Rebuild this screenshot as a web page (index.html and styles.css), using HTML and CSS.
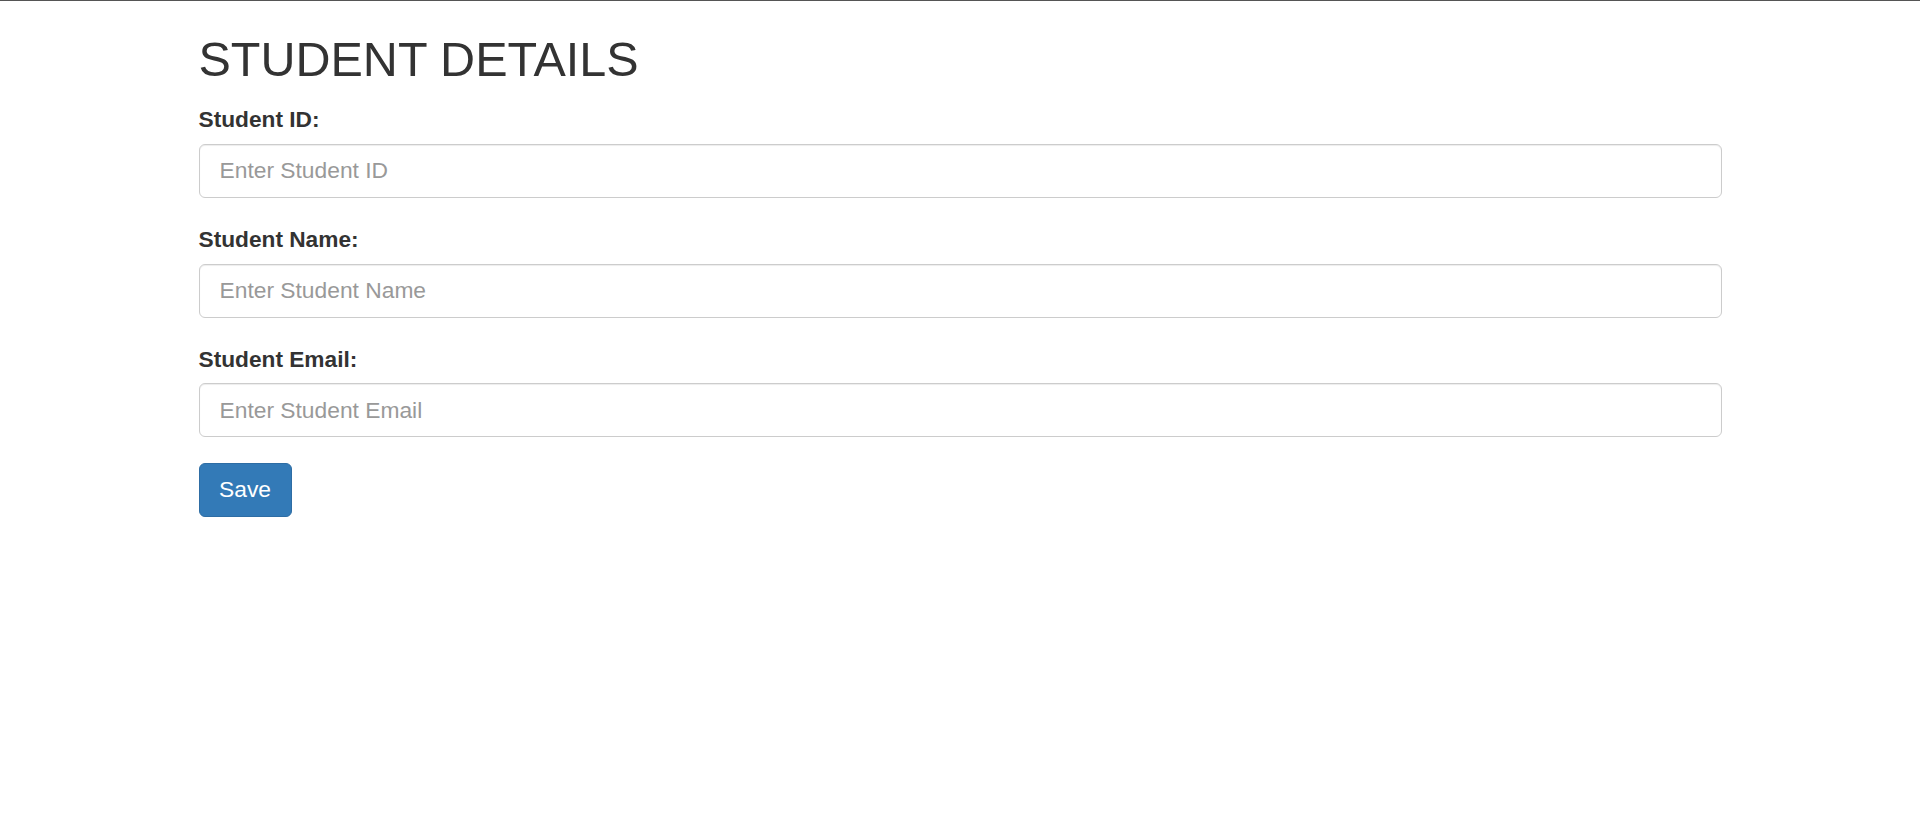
FILE: index.html
```html
<!DOCTYPE html>
<html lang="en">
<head>
<meta charset="utf-8">
<title>Student Details</title>
<link rel="stylesheet" href="styles.css">
</head>
<body>
<div class="page">
  <h2 class="title">STUDENT DETAILS</h2>
  <form class="form">
    <div class="form-group">
      <label class="label" for="sid">Student ID:</label>
      <input class="input" id="sid" type="text" placeholder="Enter Student ID">
    </div>
    <div class="form-group">
      <label class="label" for="sname">Student Name:</label>
      <input class="input" id="sname" type="text" placeholder="Enter Student Name">
    </div>
    <div class="form-group">
      <label class="label" for="semail">Student Email:</label>
      <input class="input" id="semail" type="text" placeholder="Enter Student Email">
    </div>
    <button class="btn" type="button">Save</button>
  </form>
</div>
</body>
</html>
```

FILE: styles.css
```css
html, body {
  margin: 0;
  padding: 0;
  background: #fff;
}
body {
  border-top: 1px solid #555;
  font-family: "Liberation Sans", Arial, Helvetica, sans-serif;
  color: #333;
}
.page {
  width: 1523px;
  margin: 0 auto;
  padding-top: 32px;
}
.title {
  margin: 0 0 17px;
  font-size: 48.5px;
  font-weight: 400;
  line-height: 1.1;
  color: #333;
}
.form {
  display: flex;
  flex-direction: column;
  align-items: flex-start;
}
.form-group {
  display: flex;
  flex-direction: column;
  width: 100%;
  margin-bottom: 25.3px;
}
.label {
  font-size: 22.7px;
  font-weight: 700;
  line-height: 32px;
  margin-bottom: 8.5px;
  color: #333;
}
.input {
  box-sizing: border-box;
  width: 100%;
  height: 54px;
  padding: 0 20px;
  font-family: "Liberation Sans", Arial, Helvetica, sans-serif;
  font-size: 22.8px;
  color: #555;
  background: #fff;
  border: 1px solid #ccc;
  border-radius: 6px;
  box-shadow: inset 0 1px 1px rgba(0, 0, 0, 0.075);
  outline: none;
}
.input::placeholder {
  color: #999;
}
.btn {
  box-sizing: border-box;
  height: 54px;
  width: 93px;
  padding: 0;
  font-family: "Liberation Sans", Arial, Helvetica, sans-serif;
  font-size: 22.8px;
  color: #fff;
  background: #337ab7;
  border: 1px solid #2e6da4;
  border-radius: 6px;
  cursor: pointer;
}
```
